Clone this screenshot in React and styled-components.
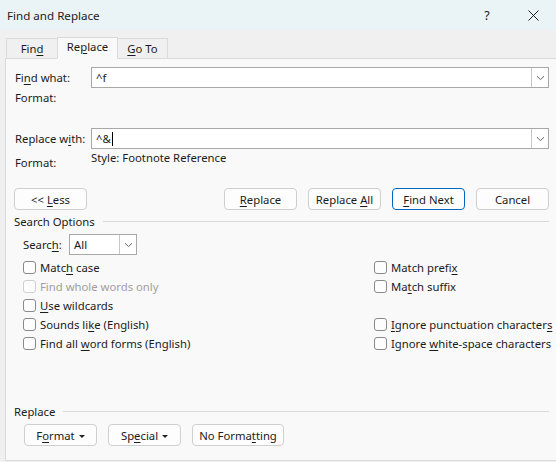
import React from 'react'
import styled, { createGlobalStyle } from 'styled-components'

const GlobalStyle = createGlobalStyle`
  html, body { margin: 0; padding: 0; background: #f0f0f0; }
  body { font-family: "Segoe UI", "Noto Sans", "Open Sans", sans-serif; font-size: 11.3px; color: #1b1b1b; }
  * { box-sizing: border-box; }
  u { text-underline-offset: 2px; }
`

const Window = styled.div`
  width: 556px;
  height: 462px;
  background: #f0f0f0;
  overflow: hidden;
`

const TitleBar = styled.div`
  height: 30px;
  background: #eaf3f6;
  display: flex;
  align-items: center;
  padding-left: 7px;
`

const Title = styled.div`
  flex: 1;
  font-size: 11.6px;
`

const TitleButton = styled.div`
  width: 46px;
  height: 30px;
  display: flex;
  align-items: center;
  justify-content: center;
  font-size: 12.5px;
`

const TabStrip = styled.div`
  height: 28px;
  display: flex;
  align-items: flex-end;
  padding-left: 6px;
  position: relative;
  z-index: 1;
`

const Tab = styled.div`
  height: ${p => (p.active ? '22px' : '20px')};
  width: ${p => p.w}px;
  display: flex;
  align-items: center;
  justify-content: center;
  padding-bottom: ${p => (p.active ? '3px' : '0')};
  border: 1px solid #dadada;
  border-bottom: ${p => (p.active ? '1px solid #f9f9f9' : 'none')};
  margin-bottom: ${p => (p.active ? '-1px' : '0')};
  background: ${p => (p.active ? '#f9f9f9' : '#f0f0f0')};
  & + & { margin-left: -1px; }
`

const Panel = styled.div`
  margin-left: 5px;
  height: 403px;
  background: #f9f9f9;
  border: 1px solid #dadada;
  border-right: none;
  padding: 8px 7px 0 8px;
  display: flex;
  flex-direction: column;
`

const FieldRow = styled.div`
  display: flex;
  align-items: center;
  margin-top: ${p => p.mt || 0}px;
`

const Label = styled.div`
  width: 77px;
  padding-left: 1px;
`

const Combo = styled.div`
  flex: 1;
  height: 21px;
  background: #fff;
  border: 1px solid #a8a8a8;
  display: flex;
  align-items: stretch;
`

const ComboText = styled.div`
  flex: 1;
  padding-left: 4px;
  display: flex;
  align-items: center;
`

const Caret = styled.span`
  display: inline-block;
  width: 1px;
  height: 14px;
  background: #000;
  margin-left: 1px;
`

const ComboArrow = styled.div`
  width: 17px;
  border-left: 1px solid #c8c8c8;
  display: flex;
  align-items: center;
  justify-content: center;
`

const FormatRow = styled.div`
  height: 18px;
  display: flex;
  align-items: center;
  padding-left: 1px;
`

const StyleRow = styled.div`
  height: 22px;
  display: flex;
  align-items: flex-start;
`

const StyleLabel = styled.div`
  width: 77px;
  padding-left: 1px;
  margin-top: 6px;
  line-height: 16px;
`

const StyleText = styled.div`
  margin-top: 1px;
  line-height: 16px;
`

const ButtonRow = styled.div`
  display: flex;
  align-items: center;
  gap: ${p => p.gap || 11}px;
  margin-top: ${p => p.mt || 0}px;
  padding-left: ${p => p.pl || 0}px;
`

const Button = styled.div`
  width: ${p => p.w || 73}px;
  height: 22px;
  border: 1px solid ${p => (p.primary ? '#0067c0' : '#cfcfcf')};
  border-radius: 4px;
  background: #fdfdfd;
  display: flex;
  align-items: center;
  justify-content: center;
  white-space: pre;
`

const Spacer = styled.div`
  flex: 1;
`

const MenuArrow = styled.span`
  display: inline-block;
  width: 0;
  height: 0;
  border-left: 3px solid transparent;
  border-right: 3px solid transparent;
  border-top: 3px solid #222;
  margin-left: 4px;
  vertical-align: 2px;
`

const Legend = styled.div`
  height: 16px;
  display: flex;
  align-items: center;
  margin-top: ${p => p.mt || 0}px;
  &::after {
    content: '';
    flex: 1;
    height: 1px;
    background: #d9d9d9;
    margin-left: 8px;
  }
`

const SearchRow = styled.div`
  display: flex;
  align-items: center;
  margin-top: 5px;
  padding-left: 9px;
`

const SearchLabel = styled.div`
  width: 46px;
`

const SmallSelect = styled(Combo)`
  flex: none;
  width: 68px;
`

const Options = styled.div`
  display: grid;
  grid-template-columns: 351px 1fr;
  grid-auto-rows: 19px;
  margin-top: 3px;
  padding-left: 9px;
`

const Option = styled.label`
  display: flex;
  align-items: center;
  gap: 4px;
  color: ${p => (p.disabled ? '#a0a0a0' : 'inherit')};
  white-space: nowrap;
`

const Box = styled.span`
  width: 13px;
  height: 13px;
  border: 1px solid ${p => (p.disabled ? '#cfcfcf' : '#8a8a8a')};
  border-radius: 3px;
  background: #fdfdfd;
  flex: none;
`

const Chevron = () => (
  <svg width="9" height="6" viewBox="0 0 9 6">
    <path d="M1 1.2 L4.5 4.6 L8 1.2" fill="none" stroke="#555" strokeWidth="0.9" />
  </svg>
)

const CloseIcon = () => (
  <svg width="11" height="11" viewBox="0 0 11 11">
    <path d="M0.5 0.5 L10.5 10.5 M10.5 0.5 L0.5 10.5" stroke="#222" strokeWidth="1" />
  </svg>
)

const options = [
  [<>Matc<u>h</u> case</>, false, <>Match prefi<u>x</u></>],
  [<>Find whole words only</>, true, <>Ma<u>t</u>ch suffix</>],
  [<><u>U</u>se wildcards</>, false, null],
  [<>Sounds li<u>k</u>e (English)</>, false, <><u>I</u>gnore punctuation character<u>s</u></>],
  [<>Find all <u>w</u>ord forms (English)</>, false, <>Ignore <u>w</u>hite-space characters</>],
]

const App = () => {
  return (
    <Window>
      <GlobalStyle />
      <TitleBar>
        <Title>Find and Replace</Title>
        <TitleButton>?</TitleButton>
        <TitleButton><CloseIcon /></TitleButton>
      </TitleBar>
      <TabStrip>
        <Tab w={52}><span>Fin<u>d</u></span></Tab>
        <Tab w={61} active><span>Re<u>p</u>lace</span></Tab>
        <Tab w={51}><span><u>G</u>o To</span></Tab>
      </TabStrip>
      <Panel>
        <FieldRow>
          <Label>Fi<u>n</u>d what:</Label>
          <Combo>
            <ComboText>^f</ComboText>
            <ComboArrow><Chevron /></ComboArrow>
          </Combo>
        </FieldRow>
        <FormatRow>Format:</FormatRow>
        <FieldRow mt={22}>
          <Label>Replace w<u>i</u>th:</Label>
          <Combo>
            <ComboText>^&amp;<Caret /></ComboText>
            <ComboArrow><Chevron /></ComboArrow>
          </Combo>
        </FieldRow>
        <StyleRow>
          <StyleLabel>Format:</StyleLabel>
          <StyleText>Style: Footnote Reference</StyleText>
        </StyleRow>
        <ButtonRow mt={17}>
          <Button><span>&lt;&lt; <u>L</u>ess</span></Button>
          <Spacer />
          <Button><span><u>R</u>eplace</span></Button>
          <Button><span>Replace <u>A</u>ll</span></Button>
          <Button primary><span><u>F</u>ind Next</span></Button>
          <Button><span>Cancel</span></Button>
        </ButtonRow>
        <Legend mt={3}>Search Options</Legend>
        <SearchRow>
          <SearchLabel>Searc<u>h</u>:</SearchLabel>
          <SmallSelect>
            <ComboText>All</ComboText>
            <ComboArrow><Chevron /></ComboArrow>
          </SmallSelect>
        </SearchRow>
        <Options>
          {options.map(([left, disabled, right], i) => (
            <React.Fragment key={i}>
              <Option disabled={disabled}><Box disabled={disabled} /><span>{left}</span></Option>
              {right ? <Option><Box /><span>{right}</span></Option> : <span />}
            </React.Fragment>
          ))}
        </Options>
        <Legend mt={50}>Replace</Legend>
        <ButtonRow mt={5} pl={10} gap={11}>
          <Button w={73}><span>F<u>o</u>rmat<MenuArrow /></span></Button>
          <Button w={73}><span>Sp<u>e</u>cial<MenuArrow /></span></Button>
          <Button w={92}><span>No Forma<u>t</u>ting</span></Button>
        </ButtonRow>
      </Panel>
    </Window>
  )
}

export default App
